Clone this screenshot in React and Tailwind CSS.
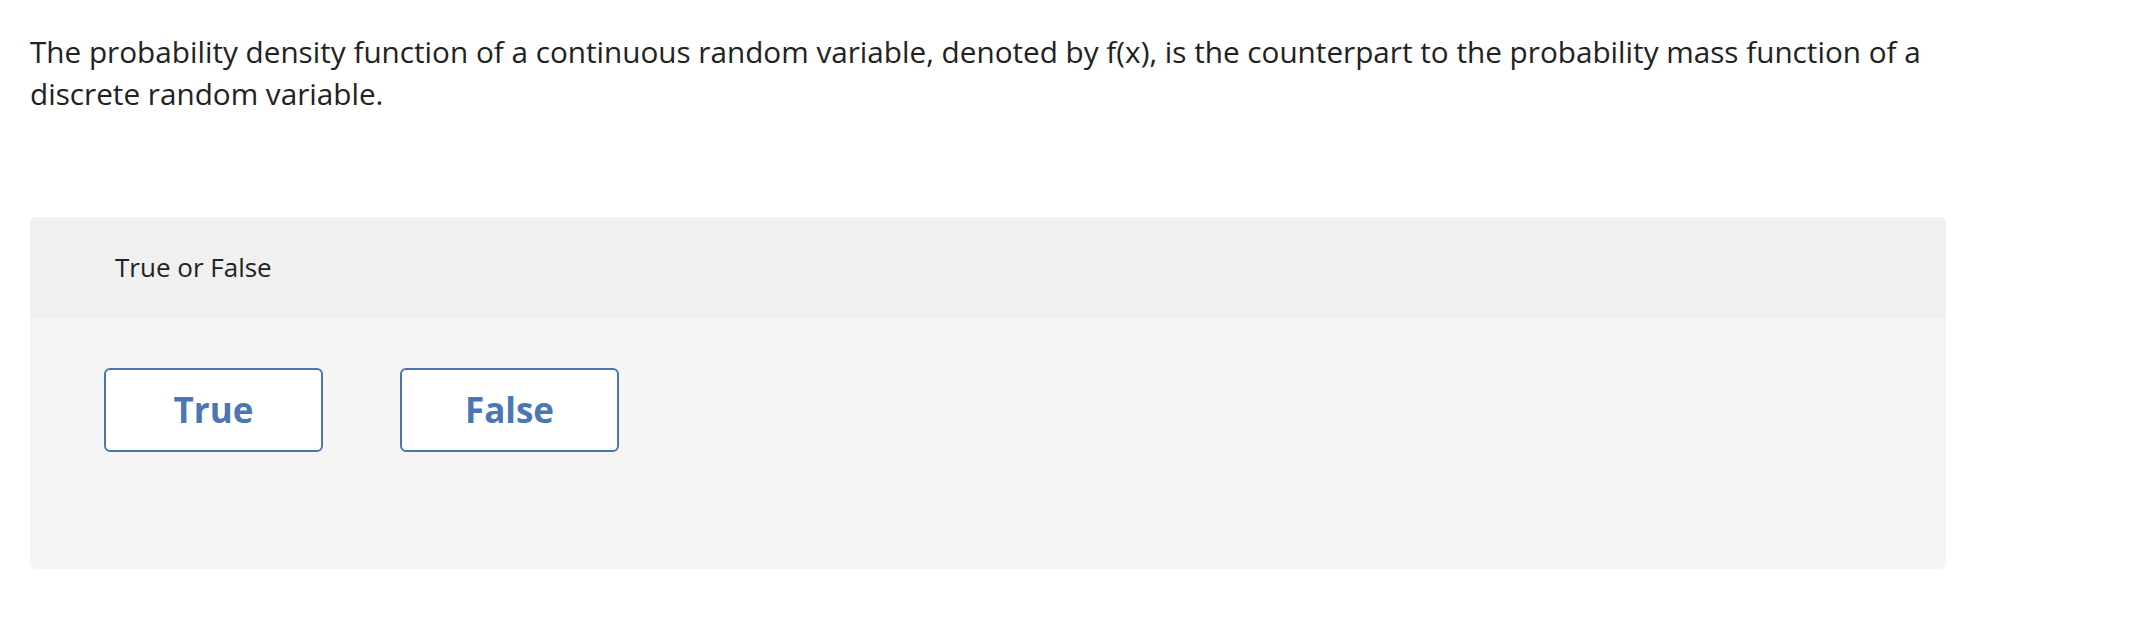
export default function App() {
  return (
    <div className="min-h-[618px] bg-white px-[30px] pt-[31px]" style={{ fontFamily: "'Open Sans', 'Liberation Sans', Arial, sans-serif" }}>
      <p className="w-[1950px] text-[29.7px] leading-[42px] text-[#222222]">
        The probability density function of a continuous random variable, denoted by f(x), is the counterpart to the probability mass function of a discrete random variable.
      </p>
      <div className="mt-[102px] w-[1916px] overflow-hidden rounded-[6px]">
        <div className="flex h-[101px] items-center bg-[#f0f0f0] pl-[85px] text-[26px] text-[#222222]">
          True or False
        </div>
        <div className="flex gap-[77px] bg-[#f5f5f5] pb-[117px] pl-[74px] pt-[50px]">
          <button className="flex h-[84px] w-[219px] items-center justify-center rounded-[6px] border-2 border-[#4a77b4] bg-white text-[35px] font-bold text-[#4a77b4]">
            True
          </button>
          <button className="flex h-[84px] w-[219px] items-center justify-center rounded-[6px] border-2 border-[#4a77b4] bg-white text-[35px] font-bold text-[#4a77b4]">
            False
          </button>
        </div>
      </div>
    </div>
  );
}
